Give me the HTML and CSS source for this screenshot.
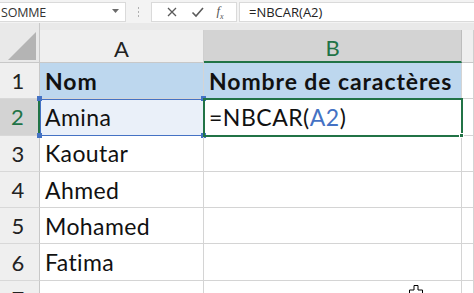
FILE: index.html
```html
<!DOCTYPE html>
<html>
<head>
<meta charset="utf-8">
<link rel="stylesheet" href="styles.css">
</head>
<body>
<div class="app">
  <div class="fbar">
    <div class="namebox">
      <span class="nb-text">SOMME</span>
      <svg class="nb-arrow" width="7" height="4" viewBox="0 0 7 4"><path d="M0 0 L7 0 L3.5 4 Z" fill="#6b6b6b"/></svg>
    </div>
    <div class="dots"><span></span><span></span><span></span></div>
    <div class="btns">
      <svg width="12" height="12" viewBox="0 0 12 12"><path d="M2 2 L10 10 M10 2 L2 10" stroke="#5a5a5a" stroke-width="1.3" fill="none"/></svg>
      <svg width="13" height="12" viewBox="0 0 13 12"><path d="M1.5 6.5 L5 10 L12 2" stroke="#5a5a5a" stroke-width="1.6" fill="none"/></svg>
      <span class="fx"><i>f</i><sub>x</sub></span>
    </div>
    <div class="finput">=NBCAR(A2)</div>
  </div>
  <div class="band"></div>
  <div class="sheet">
    <div class="corner"><svg width="29" height="28" viewBox="0 0 29 28"><path d="M28 0 L28 28 L0 28 Z" fill="#b4b4b4"/></svg></div>
    <div class="ch">A</div>
    <div class="ch sel">B</div>
    <div class="ch c"></div>

    <div class="rh">1</div>
    <div class="cell hd">Nom</div>
    <div class="cell hd">Nombre de caractères</div>
    <div class="cell"></div>

    <div class="rh rsel">2</div>
    <div class="cell ref">Amina<span class="h tl"></span><span class="h tr"></span><span class="h bl"></span><span class="h br"></span></div>
    <div class="cell active">=NBCAR(<span class="blue">A2</span>)<span class="fill"></span></div>
    <div class="cell"></div>

    <div class="rh">3</div>
    <div class="cell">Kaoutar</div>
    <div class="cell"></div>
    <div class="cell"></div>

    <div class="rh">4</div>
    <div class="cell">Ahmed</div>
    <div class="cell"></div>
    <div class="cell"></div>

    <div class="rh">5</div>
    <div class="cell">Mohamed</div>
    <div class="cell"></div>
    <div class="cell"></div>

    <div class="rh">6</div>
    <div class="cell">Fatima</div>
    <div class="cell"></div>
    <div class="cell"></div>

    <div class="rh">7</div>
    <div class="cell"></div>
    <div class="cell"><svg class="cursor" width="14" height="14" viewBox="0 0 14 14"><path d="M5 0.5 H9 V5 H13.5 V9 H9 V13.5 H5 V9 H0.5 V5 H5 Z" fill="#fff" stroke="#000" stroke-width="1"/></svg></div>
    <div class="cell"></div>
  </div>
</div>
</body>
</html>
```
FILE: styles.css
```css
* { box-sizing: border-box; }
html, body { margin: 0; padding: 0; }
body {
  width: 474px;
  height: 293px;
  overflow: hidden;
  background: #ffffff;
  font-family: Lato, "Liberation Sans", sans-serif;
}
.app { display: flex; flex-direction: column; }
.fbar {
  height: 23px;
  background: #f3f3f3;
  display: flex;
  align-items: stretch;
  padding: 2px 0 1px 0;
}
.namebox {
  width: 126px;
  background: #fff;
  border: 1px solid #dadada;
  border-left: none;
  display: flex;
  align-items: center;
  justify-content: space-between;
  padding: 0 6px 0 1px;
  color: #333;
}
.nb-text { font-family: "Open Sans", "Liberation Sans", sans-serif; font-size: 12.5px; letter-spacing: -0.2px; }
.nb-arrow { margin-top: -2px; }
.dots {
  width: 25px;
  display: flex;
  flex-direction: column;
  align-items: center;
  justify-content: center;
  gap: 2px;
}
.dots span { width: 1px; height: 2px; background: #b0b0b0; }
.btns {
  width: 86px;
  background: #fff;
  border: 1px solid #dadada;
  display: flex;
  align-items: center;
  justify-content: space-around;
  padding: 0 6px 0 8px;
}
.fx { font-family: "Liberation Serif", serif; font-size: 13px; color: #555; }
.fx sub { font-size: 8px; font-style: italic; }
.finput {
  flex: 1;
  margin-left: 2px;
  background: #fff;
  border: 1px solid #dadada;
  border-right: none;
  display: flex;
  align-items: center;
  padding-left: 9px;
  font-family: "Open Sans", "Liberation Sans", sans-serif;
  font-size: 13px;
  color: #222;
}
.band { height: 7px; background: #e9e9e9; }
.sheet {
  display: grid;
  grid-template-columns: 40px 164px 258px 1fr;
  grid-template-rows: 33px repeat(7, 36.3px);
}
.corner {
  background: #e9e9e9;
  margin-top: -7px;
  border-right: 1px solid #c8c8c8;
  border-bottom: 1px solid #c8c8c8;
  display: flex;
  align-items: flex-end;
  justify-content: flex-end;
  padding: 0 2px 2px 0;
}
.ch {
  background: #efefef;
  border-right: 1px solid #cfcfcf;
  border-bottom: 1px solid #c8c8c8;
  display: flex;
  align-items: center;
  justify-content: center;
  font-size: 22px;
  color: #222;
  padding-top: 4px;
}
.ch.sel {
  background: #d3d3d3;
  color: #217346;
  border-bottom: 2px solid #217346;
  border-right: 1px solid #bdbdbd;
}
.ch.c { background: #efefef; }
.rh {
  background: #efefef;
  border-right: 1px solid #c8c8c8;
  border-bottom: 1px solid #d8d8d8;
  display: flex;
  align-items: center;
  justify-content: center;
  font-size: 22px;
  color: #222;
  padding-right: 3px;
}
.rh.rsel { background: #d3d3d3; color: #217346; border-right: 2px solid #217346; }
.cell {
  position: relative;
  border-right: 1px solid #d4d4d4;
  border-bottom: 1px solid #d4d4d4;
  display: flex;
  align-items: center;
  padding-left: 5px;
  font-size: 23px;
  letter-spacing: 0.4px;
  color: #111;
  white-space: nowrap;
}
.cell.hd { background: #bdd7ee; font-weight: 700; letter-spacing: 0.9px; }
.cell.ref {
  background: #eaf0f9;
  outline: 1.5px solid #4472c4;
  outline-offset: -1px;
}
.cell.active {
  outline: 2px solid #217346;
  outline-offset: -1px;
  z-index: 2;
  letter-spacing: 0.5px;
}
.blue { color: #4472c4; }
.h {
  position: absolute;
  width: 5px;
  height: 5px;
  background: #4472c4;
}
.h.tl { left: -3px; top: -3px; }
.h.tr { right: -3px; top: -3px; }
.h.bl { left: -3px; bottom: -3px; }
.h.br { right: -3px; bottom: -3px; }
.fill {
  position: absolute;
  right: -3px;
  bottom: -3px;
  width: 5px;
  height: 5px;
  background: #217346;
  border: 1px solid #fff;
}
.cursor { position: absolute; left: 205px; top: 4px; }
```
